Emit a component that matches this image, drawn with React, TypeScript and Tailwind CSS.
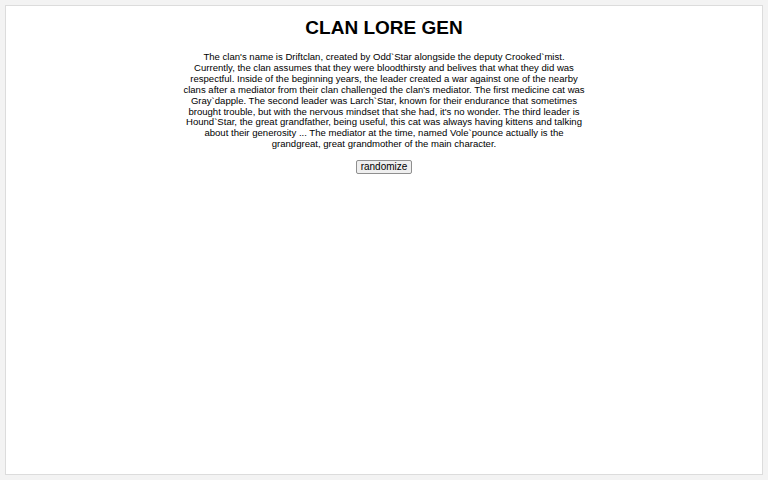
import { useState } from "react";

// lore text, one entry per printed line
const LORE = [
  "The clan's name is Driftclan, created by Odd`Star alongside the deputy Crooked`mist.",
  "Currently, the clan assumes that they were bloodthirsty and belives that what they did was",
  "respectful. Inside of the beginning years, the leader created a war against one of the nearby",
  "clans after a mediator from their clan challenged the clan's mediator. The first medicine cat was",
  "Gray`dapple. The second leader was Larch`Star, known for their endurance that sometimes",
  "brought trouble, but with the nervous mindset that she had, it's no wonder. The third leader is",
  "Hound`Star, the great grandfather, being useful, this cat was always having kittens and talking",
  "about their generosity ... The mediator at the time, named Vole`pounce actually is the",
  "grandgreat, great grandmother of the main character.",
];

export default function App() {
  const [lore] = useState(LORE);

  return (
    <div className="h-[480px] w-[768px] bg-[#f3f3f3] p-[5px] font-['Liberation_Sans',Arial,sans-serif] text-black">
      <div className="flex h-full flex-col items-center border border-[#dcdcdc] bg-white">
        <h1 className="mt-[11px] text-[19px] font-bold leading-[22px]">CLAN LORE GEN</h1>
        <p className="mt-[13px] w-[420px] text-center text-[9.55px] leading-[10.9px]">
          {lore.map((line, i) => (
            <span key={i} className="block">
              {line}
            </span>
          ))}
        </p>
        <button className="mt-[10px] rounded-[2px] border border-[#8f8f8f] bg-[#efefef] px-[3.5px] text-[10px] leading-[12px]">
          randomize
        </button>
      </div>
    </div>
  );
}
